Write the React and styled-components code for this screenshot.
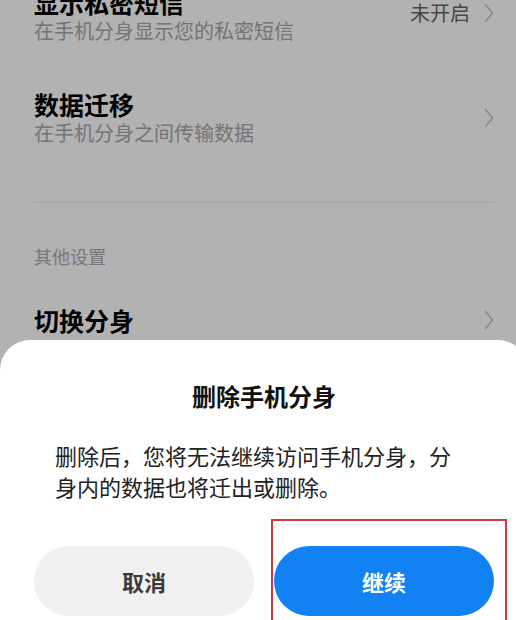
import React from 'react';
import styled, { createGlobalStyle } from 'styled-components';

const GlobalStyle = createGlobalStyle`
  html, body {
    margin: 0;
    padding: 0;
    background: #ffffff;
    overflow: hidden;
  }
  body {
    font-family: "Noto Sans CJK SC", "Noto Sans", sans-serif;
  }
`;

const Viewport = styled.div`
  width: 516px;
  height: 620px;
  overflow: hidden;
`;

const Screen = styled.div`
  position: relative;
  width: 528px;
  height: 620px;
  overflow: hidden;
  background: #ffffff;
`;

const SettingsList = styled.div`
  margin-top: -35px;
  padding: 0 34px;
`;

const Row = styled.div`
  display: flex;
  align-items: center;
  justify-content: space-between;
  padding: 22px 0;
`;

const RowText = styled.div`
  display: flex;
  flex-direction: column;
`;

const RowTitle = styled.div`
  font-size: 25px;
  line-height: 30px;
  font-weight: 700;
  color: #000000;
`;

const RowSubtitle = styled.div`
  font-size: 20px;
  line-height: 28px;
  color: #a8a8a8;
`;

const RowEnd = styled.div`
  display: flex;
  align-items: center;
  gap: 14px;
  margin-bottom: ${p => (p.$raised ? '6px' : '0')};
`;

const RowValue = styled.span`
  font-size: 20px;
  line-height: 28px;
  color: #666666;
`;

const Divider = styled.div`
  height: 1px;
  background: #ebebeb;
  margin-top: 33px;
`;

const SectionHeader = styled.div`
  font-size: 18px;
  line-height: 24px;
  color: #a9a9ae;
  padding: 41px 0 15px;
`;

const Overlay = styled.div`
  position: absolute;
  inset: 0;
  background: rgba(0, 0, 0, 0.3);
  display: flex;
  flex-direction: column;
  justify-content: flex-end;
`;

const Sheet = styled.div`
  height: 280px;
  background: #ffffff;
  border-radius: 30px 30px 0 0;
  box-sizing: border-box;
  padding-top: 40px;
`;

const SheetTitle = styled.div`
  text-align: center;
  font-size: 24px;
  line-height: 32px;
  font-weight: 700;
  color: #111111;
`;

const SheetBody = styled.p`
  margin: 28px 0 0;
  padding: 0 60px 0 55px;
  font-size: 22px;
  line-height: 31px;
  color: #222222;
`;

const Actions = styled.div`
  display: grid;
  grid-template-columns: 1fr 1fr;
  gap: 20px;
  padding: 0 34px;
  margin-top: 44px;
`;

const Highlight = styled.div`
  position: relative;

  &::after {
    content: '';
    position: absolute;
    top: -27px;
    left: -3px;
    right: -13px;
    bottom: -10px;
    border: 2px solid #d8353c;
    pointer-events: none;
  }
`;

const ActionButton = styled.button`
  width: 100%;
  height: 70px;
  border: none;
  border-radius: 35px;
  font-family: inherit;
  font-size: 22px;
  font-weight: 700;
  background: ${p => (p.$primary ? '#1282f2' : '#f0f0f0')};
  color: ${p => (p.$primary ? '#ffffff' : '#3a3a3a')};
  cursor: pointer;
`;

const Chevron = () => (
  <svg width="10" height="20" viewBox="0 0 10 20" fill="none">
    <polyline
      points="1.5,1.5 8.5,10 1.5,18.5"
      stroke="#c4c4c4"
      strokeWidth="1.6"
      strokeLinecap="round"
      strokeLinejoin="round"
    />
  </svg>
);

const settings = [
  { title: '显示私密短信', subtitle: '在手机分身显示您的私密短信', value: '未开启' },
  { title: '数据迁移', subtitle: '在手机分身之间传输数据' },
];

export default function App() {
  return (
    <Viewport>
      <GlobalStyle />
      <Screen>
        <SettingsList>
          {settings.map(item => (
            <Row key={item.title}>
              <RowText>
                <RowTitle>{item.title}</RowTitle>
                <RowSubtitle>{item.subtitle}</RowSubtitle>
              </RowText>
              <RowEnd $raised={!!item.value}>
                {item.value && <RowValue>{item.value}</RowValue>}
                <Chevron />
              </RowEnd>
            </Row>
          ))}
          <Divider />
          <SectionHeader>其他设置</SectionHeader>
          <Row>
            <RowText>
              <RowTitle>切换分身</RowTitle>
            </RowText>
            <RowEnd>
              <Chevron />
            </RowEnd>
          </Row>
        </SettingsList>

        <Overlay>
          <Sheet>
            <SheetTitle>删除手机分身</SheetTitle>
            <SheetBody>删除后，您将无法继续访问手机分身，分身内的数据也将迁出或删除。</SheetBody>
            <Actions>
              <ActionButton>取消</ActionButton>
              <Highlight>
                <ActionButton $primary>继续</ActionButton>
              </Highlight>
            </Actions>
          </Sheet>
        </Overlay>
      </Screen>
    </Viewport>
  );
}
